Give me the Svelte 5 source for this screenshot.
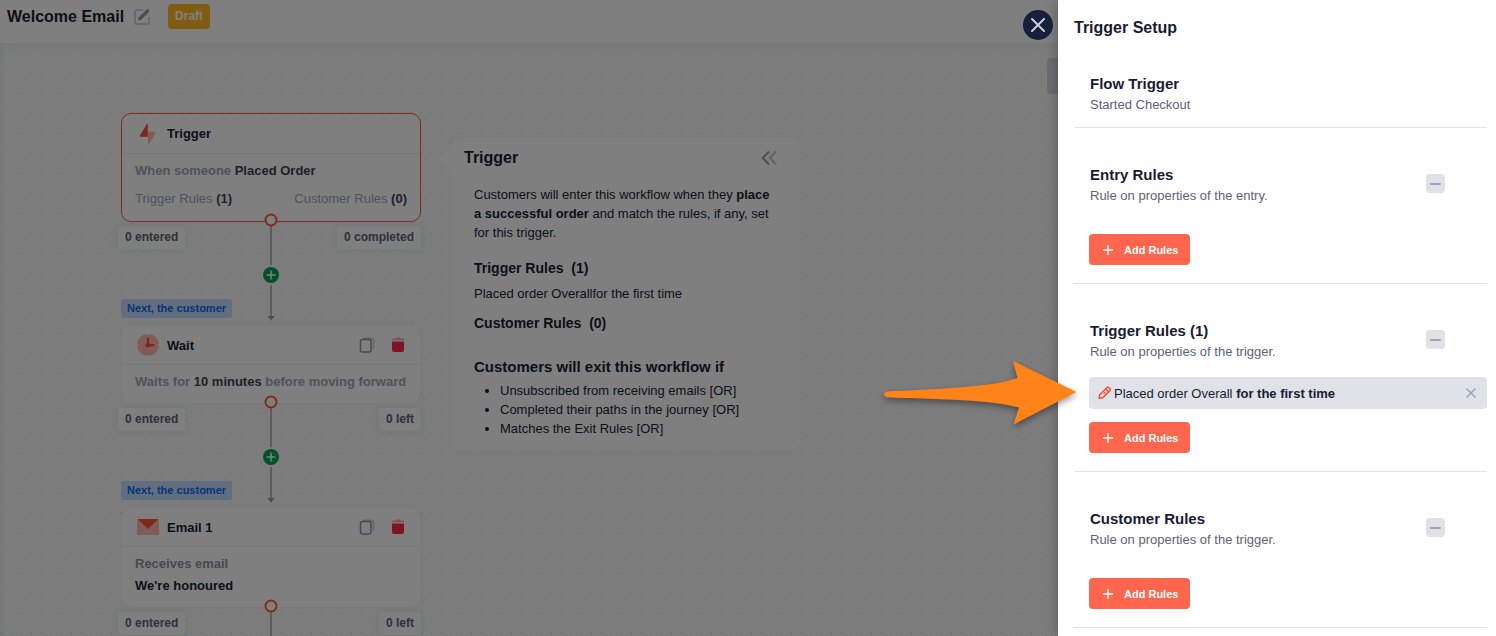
<script>
  const steps = [
    { kind: 'trigger', title: 'Trigger', left: '0 entered', right: '0 completed' },
    { kind: 'wait', title: 'Wait', left: '0 entered', right: '0 left' },
    { kind: 'email', title: 'Email 1', left: '0 entered', right: '0 left' }
  ];

  const exits = [
    'Unsubscribed from receiving emails [OR]',
    'Completed their paths in the journey [OR]',
    'Matches the Exit Rules [OR]'
  ];

  let sections = $state([
    { title: 'Entry Rules', hint: 'Rule on properties of the entry.', rules: [] },
    {
      title: 'Trigger Rules (1)',
      hint: 'Rule on properties of the trigger.',
      rules: [{ subject: 'Placed order Overall', condition: 'for the first time' }]
    },
    { title: 'Customer Rules', hint: 'Rule on properties of the trigger.', rules: [] }
  ]);
</script>

<div class="app">
  <main class="workspace">
    <header class="topbar">
      <h1>Welcome Email</h1>
      <button class="plain edit" aria-label="Rename workflow">
        <svg width="18" height="18" viewBox="0 0 18 18">
          <path d="M10 2H3.5Q2 2 2 3.500V14.500Q2 16 3.500 16H14.500Q16 16 16 14.500V9" fill="none" stroke="#d3d4de" stroke-width="2" />
          <path d="M5 12.500 5.800 9.300 13.600 1.500Q14.800 .6 16 1.600 17 2.700 16 3.900L8.200 11.700Z" fill="#9698b0" />
        </svg>
      </button>
      <span class="draft">Draft</span>
    </header>

    <div class="canvas">
      <div class="flow">
        {#each steps as step, i}
          {#if i > 0}
            <span class="next">Next, the customer</span>
          {/if}
          <article class="node" class:active={step.kind === 'trigger'}>
            <header class="node-head">
              {#if step.kind === 'trigger'}
                <svg width="24" height="24" viewBox="0 0 24 24">
                  <path d="M10.800 2.200Q11.800 1.200 11.800 2.600V14.800H4.600Q3.200 14.800 4 13.400Z" fill="#ff4f30" />
                  <path d="M12 9.800H18.800Q20.200 9.800 19.500 11.200L13.200 22Q12 23.500 12 21.800Z" fill="#ff4f30" opacity=".4" />
                </svg>
              {:else if step.kind === 'wait'}
                <svg width="24" height="24" viewBox="0 0 24 24">
                  <circle cx="12" cy="12" r="11" fill="#ffb8ae" />
                  <path d="M12 0V2.500M12 21.500V24M0 12H2.500M21.500 12H24" stroke="#fff" stroke-width="1.500" />
                  <path d="M12 5.500V12.200H17.500" fill="none" stroke="#ff4f30" stroke-width="2.200" stroke-linecap="round" />
                  <circle cx="12" cy="12.200" r="2.300" fill="#ff4f30" />
                </svg>
              {:else}
                <svg width="24" height="24" viewBox="0 0 24 24">
                  <rect x="1" y="4" width="22" height="16" rx="1" fill="#ffb8ae" />
                  <path d="M1.500 4H22.500L12 14Z" fill="#ff4f30" />
                </svg>
              {/if}
              <h2>{step.title}</h2>
              {#if step.kind !== 'trigger'}
                <div class="tools">
                  <button class="plain" aria-label="Duplicate {step.title}">
                    <svg width="16" height="16" viewBox="0 0 16 16">
                      <path d="M4 1.500H12.500Q14.500 1.500 14.500 3.500V12" fill="none" stroke="#cfd0da" stroke-width="1.800" />
                      <rect x="1.500" y="2.500" width="10.500" height="12.500" rx="2" fill="#fff" stroke="#8f91a6" stroke-width="1.500" />
                    </svg>
                  </button>
                  <button class="plain" aria-label="Delete {step.title}">
                    <svg width="16" height="16" viewBox="0 0 16 16">
                      <path d="M2 4.500H14V13Q14 15 12 15H4Q2 15 2 13Z" fill="#ff2846" />
                      <path d="M2 2.500Q2 1.500 3 1.500H6V.5H10V1.500H13Q14 1.500 14 2.500V3.200H2Z" fill="#ff9aa6" />
                    </svg>
                  </button>
                </div>
              {/if}
            </header>
            <div class="node-body">
              {#if step.kind === 'trigger'}
                <p>When someone <b>Placed Order</b></p>
                <p class="counts">
                  <span>Trigger Rules <b>(1)</b></span>
                  <span>Customer Rules <b>(0)</b></span>
                </p>
              {:else if step.kind === 'wait'}
                <p>Waits for <b>10 minutes</b> before moving forward</p>
              {:else}
                <p class="slate">Receives email</p>
                <p><b class="ink">We're honoured</b></p>
              {/if}
            </div>
            <svg class="connector" width="20" height="112" viewBox="0 0 20 112" aria-hidden="true">
              <path d="M10 12V106" stroke="#b8b8bc" stroke-width="2" />
              <path d="M6.500 103H13.500L10 107.500Z" fill="#96969e" />
              <circle cx="10" cy="7" r="5.500" fill="#fff" stroke="#ff5a34" stroke-width="2" />
              <circle cx="10" cy="62" r="10" fill="#fafafa" />
              <circle cx="10" cy="62" r="8" fill="#00a651" />
              <path d="M5.500 62H14.500M10 57.500V66.500" stroke="#fff" stroke-width="1.500" />
            </svg>
          </article>
          <div class="stats">
            <span>{step.left}</span>
            <span>{step.right}</span>
          </div>
        {/each}
      </div>

      <aside class="info">
        <header>
          <h2>Trigger</h2>
          <button class="plain" aria-label="Collapse details">
            <svg width="16" height="16" viewBox="0 0 16 16">
              <path d="M8 1.500 1.800 8 8 14.500" fill="none" stroke="#9698ae" stroke-width="2" />
              <path d="M15 1.500 8.800 8 15 14.500" fill="none" stroke="#c6c7d3" stroke-width="2" />
            </svg>
          </button>
        </header>
        <div class="info-body">
          <p>
            Customers will enter this workflow when they <b>place a successful order</b> and match the
            rules, if any, set for this trigger.
          </p>
          <h3>Trigger Rules&nbsp; (1)</h3>
          <p>Placed order Overallfor the first time</p>
          <h3 class="tight">Customer Rules&nbsp; (0)</h3>
          <h4>Customers will exit this workflow if</h4>
          <ul>
            {#each exits as line}
              <li>{line}</li>
            {/each}
          </ul>
        </div>
      </aside>
    </div>
  </main>

  <div class="scrim"><span class="tab"></span></div>

  <aside class="drawer">
    <button class="close" aria-label="Close">
      <svg width="14" height="14" viewBox="0 0 14 14">
        <path d="M1 1 13 13M13 1 1 13" stroke="#c9cddd" stroke-width="2" stroke-linecap="round" />
      </svg>
    </button>
    <h2 class="drawer-title">Trigger Setup</h2>

    <section class="first">
      <div class="head">
        <div>
          <h3>Flow Trigger</h3>
          <p>Started Checkout</p>
        </div>
      </div>
    </section>

    {#each sections as section}
      <section>
        <div class="head">
          <div>
            <h3>{section.title}</h3>
            <p>{section.hint}</p>
          </div>
          <button class="minus" aria-label="Collapse {section.title}"></button>
        </div>
        {#each section.rules as rule}
          <div class="rule">
            <button class="plain" aria-label="Edit rule">
              <svg width="14" height="14" viewBox="0 0 14 14">
                <path d="M1.200 12.300 1.700 8.700 8.800 1.700Q10 .7 11.400 2 12.900 3.400 11.900 4.700L4.800 11.700Z" fill="none" stroke="#ff4a2e" stroke-width="1.500" stroke-linejoin="round" />
                <path d="M7.600 3 10.600 6M5.500 8 7.500 6" stroke="#ff4a2e" stroke-width="1.100" />
              </svg>
            </button>
            <span class="rule-text">{rule.subject} <b>{rule.condition}</b></span>
            <button class="plain" aria-label="Remove rule" onclick={() => (section.rules = [])}>
              <svg width="10" height="10" viewBox="0 0 10 10">
                <path d="M.5 .5 9.500 9.500M9.500 .5 .5 9.500" stroke="#93a4b1" stroke-width="1.300" />
              </svg>
            </button>
          </div>
        {/each}
        <button class="add" class:after-rule={section.rules.length > 0}>
          <svg width="12" height="12" viewBox="0 0 12 12">
            <path d="M6 1V11M1 6H11" stroke="#fff" stroke-width="1.400" />
          </svg>
          Add Rules
        </button>
      </section>
    {/each}

    <svg class="pointer" width="204" height="76" viewBox="0 0 204 76" aria-hidden="true">
      <path
        d="M8.500 31.500C52 29.500 116 27 138.500 18L134 1 197.500 32 134.500 64.500 140 47.500C112 39.500 62 39.500 8 37.200Q5 36 5 34.400 5.200 32 8.500 31.500Z"
        fill="#ff8319"
      />
    </svg>
  </aside>
</div>

<style>
  :global(body) {
    margin: 0;
    background: #808080;
  }
  .app {
    position: relative;
    min-height: 100vh;
    overflow: hidden;
    font-family: "Liberation Sans", Arial, Helvetica, sans-serif;
    font-size: 13px;
    color: #181c32;
  }
  .app * {
    box-sizing: border-box;
  }
  h1, h2, h3, h4, p, ul {
    margin: 0;
  }
  button {
    font-family: inherit;
    border: 0;
    cursor: pointer;
  }
  svg {
    display: block;
  }
  .plain {
    padding: 0;
    background: none;
  }

  .workspace {
    display: flex;
    flex-direction: column;
    height: 100vh;
    background: #fff;
  }
  .topbar {
    display: flex;
    align-items: center;
    flex: none;
    height: 43px;
    padding: 0 7px 10px;
  }
  h1 {
    font-size: 16px;
    line-height: 24px;
  }
  .edit {
    margin: 0 17px 0 9px;
  }
  .draft {
    padding: 0 7px;
    border-radius: 4px;
    background: #ffb822;
    color: #fff;
    font-size: 12px;
    font-weight: 700;
    line-height: 25px;
  }
  .canvas {
    display: flex;
    align-items: flex-start;
    flex: 1;
    min-height: 0;
    gap: 30px;
    padding: 70px 0 0 121px;
    background-color: #f8f9f9;
    background-image: url("data:image/svg+xml,%3Csvg xmlns='http://www.w3.org/2000/svg' width='10' height='10'%3E%3Crect width='1' height='1' fill='%23cfd0d0'/%3E%3C/svg%3E");
    background-position: 1px 9px;
    box-shadow: inset 2px 4px 8px rgba(0, 0, 0, 0.05);
  }
  .flow {
    display: flex;
    flex-direction: column;
    flex: none;
    width: 300px;
  }
  .node {
    position: relative;
    border: 1px solid #f4f4f6;
    border-radius: 10px;
    background: #fff;
  }
  .node.active {
    border-color: #ff5a42;
  }
  .node-head {
    display: flex;
    align-items: center;
    gap: 7px;
    height: 40px;
    padding: 0 14px;
    border-bottom: 1px solid #eceef2;
  }
  .node:not(.active) .node-head {
    height: 39px;
  }
  .node h2 {
    flex: 1;
    font-size: 13px;
  }
  .tools {
    display: flex;
    gap: 15px;
  }
  .node-body {
    display: flex;
    flex-direction: column;
    gap: 6px;
    padding: 6px 13px 11px;
    color: #a1a4b6;
    font-weight: 700;
    line-height: 22px;
  }
  .node:not(.active) .node-body {
    gap: 0;
    padding-bottom: 10px;
  }
  .node-body b {
    color: #3f4254;
  }
  .node-body .ink {
    color: #181c32;
  }
  .node-body .slate {
    color: #8e91a6;
  }
  .counts {
    display: flex;
    justify-content: space-between;
    font-weight: 400;
  }
  .connector {
    position: absolute;
    top: calc(100% - 8px);
    left: calc(50% - 10px);
  }
  .stats {
    display: flex;
    justify-content: space-between;
    margin: 4px 0 50px -3px;
  }
  .stats span {
    padding: 0 7px;
    border-radius: 3px;
    background: #fff;
    box-shadow: 0 0 8px rgba(60, 60, 90, 0.1);
    color: #5e6278;
    font-size: 12px;
    font-weight: 700;
    line-height: 23px;
  }
  .next {
    align-self: flex-start;
    margin-bottom: 7px;
    padding: 0 6px;
    border-radius: 3px;
    background: #c4dcff;
    color: #0a6cf0;
    font-size: 11px;
    font-weight: 700;
    line-height: 19px;
  }

  .info {
    position: relative;
    flex: none;
    width: 350px;
    margin-top: 25px;
    padding: 9px 24px 12px 13px;
    border-radius: 10px;
    background: #fff;
  }
  .info::before {
    content: "";
    position: absolute;
    top: 8px;
    right: 100%;
    border: solid transparent;
    border-width: 13px 13px 13px 0;
    border-right-color: #fff;
  }
  .info header {
    display: flex;
    align-items: center;
    justify-content: space-between;
  }
  .info h2 {
    font-size: 16px;
    line-height: 22px;
  }
  .info-body {
    padding: 16px 0 0 10px;
    line-height: 19px;
  }
  .info h3 {
    margin: 17px 0 6px;
    font-size: 14px;
    line-height: 19px;
  }
  .info h3.tight {
    margin: 11px 0 0;
  }
  .info h4 {
    margin: 24px 0 4px;
    font-size: 15px;
    line-height: 20px;
  }
  .info ul {
    padding-left: 26px;
  }

  .scrim {
    position: absolute;
    inset: 0;
    background: rgba(0, 0, 0, 0.5);
  }
  .tab {
    position: absolute;
    top: 58px;
    right: 438px;
    width: 11px;
    height: 36px;
    border-radius: 4px 0 0 4px;
    background: #6c6c73;
  }

  .drawer {
    position: absolute;
    top: 0;
    right: 0;
    bottom: 0;
    width: 438px;
    padding: 16px 9px 0 16px;
    background: #fff;
    box-shadow: 0 0 12px rgba(0, 0, 0, 0.3);
  }
  .close {
    position: absolute;
    top: 10px;
    right: calc(100% + 5px);
    display: grid;
    place-items: center;
    width: 30px;
    height: 30px;
    padding: 0;
    border-radius: 50%;
    background: #181f38;
  }
  .drawer-title {
    font-size: 16px;
    line-height: 24px;
  }
  section {
    padding: 36px 0 18px 15px;
    border-bottom: 1px solid #e1e2e5;
  }
  section.first {
    padding-top: 33px;
    padding-bottom: 12px;
  }
  .head {
    display: flex;
    align-items: flex-start;
    justify-content: space-between;
    padding: 0 42px 0 1px;
    line-height: 21px;
  }
  .head h3 {
    font-size: 15px;
  }
  .head p {
    color: #5e6278;
  }
  .minus {
    display: grid;
    place-items: center;
    width: 19px;
    height: 19px;
    margin-top: 10px;
    padding: 0;
    border-radius: 4px;
    background: #e0e1e6;
  }
  .minus::before {
    content: "";
    width: 11px;
    height: 2px;
    border-radius: 1px;
    background: #a0a3b5;
  }
  .rule {
    display: flex;
    align-items: center;
    height: 32px;
    margin-top: 15px;
    padding: 0 11px 0 9px;
    border-radius: 4px;
    background: #dfe2e7;
  }
  .rule-text {
    flex: 1;
    padding-left: 2px;
  }
  .add {
    display: flex;
    align-items: center;
    gap: 10px;
    height: 31px;
    margin-top: 28px;
    padding: 0 12px 0 13px;
    border-radius: 4px;
    background: #ff664d;
    color: #fff;
    font-size: 11px;
    font-weight: 700;
  }
  .add.after-rule {
    margin-top: 13px;
  }
  .pointer {
    position: absolute;
    top: 360px;
    left: -179px;
    filter: drop-shadow(0 3px 3px rgba(0, 0, 0, 0.4));
    pointer-events: none;
  }
</style>
